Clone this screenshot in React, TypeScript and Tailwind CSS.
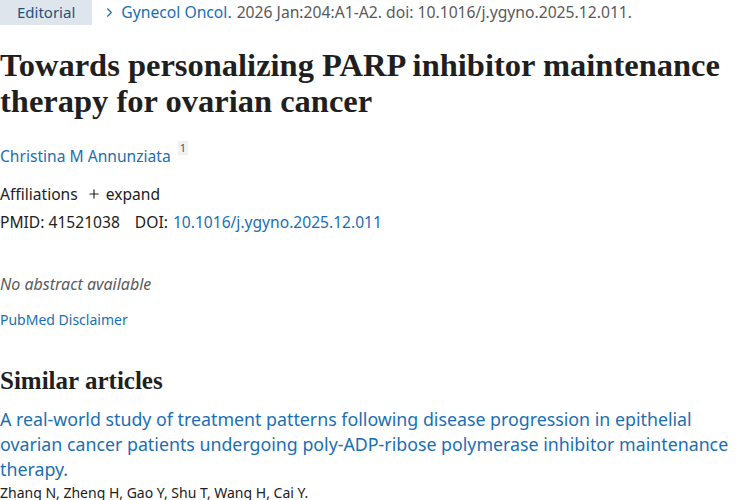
import { Plus, ChevronRight } from "lucide-react";

const sans = "font-['Segoe_UI','Noto_Sans',sans-serif]";
const serif = "font-['Liberation_Serif',serif]";

function Breadcrumb() {
  return (
    <div className="flex items-center text-[15.7px] leading-none">
      <span className="bg-[#dfe5ec] px-[17px] py-[5px] text-[15px] text-[#26517c]">Editorial</span>
      <ChevronRight className="ml-[10px] h-[15px] w-[15px] text-[#1a6fb3]" strokeWidth={1.8} />
      <span className="ml-[4px] text-[#1a6fb3]">Gynecol Oncol.</span>
      <span className="ml-[5px] text-[#5a5a5a]">2026 Jan:204:A1-A2. doi: 10.1016/j.ygyno.2025.12.011.</span>
    </div>
  );
}

export default function App() {
  return (
    <div className={`${sans} h-[500px] w-[750px] overflow-hidden bg-white text-[#212121]`}>
      <Breadcrumb />

      <h1 className={`${serif} mt-[22px] text-[32.5px] font-bold leading-[36px] text-[#1f1f1f]`}>
        Towards personalizing PARP inhibitor maintenance therapy for ovarian cancer
      </h1>

      <div className="mt-[25px] flex items-start text-[15.6px] leading-[24px]">
        <a className="text-[#1a6fb3]">Christina M Annunziata</a>
        <sup className="ml-[7px] mt-[2px] bg-[#f1f1f1] px-[2px] text-[11px] leading-[14px] text-[#555]">1</sup>
      </div>

      <div className="mt-[14px] flex items-center text-[15.6px] leading-[24px] text-[#212121]">
        <span>Affiliations</span>
        <Plus className="ml-[9px] h-[14px] w-[14px]" strokeWidth={2} />
        <span className="ml-[5px]">expand</span>
      </div>

      <div className="mt-[4px] flex text-[15.6px] leading-[24px]">
        <span>PMID: 41521038</span>
        <span className="ml-[15px]">DOI:</span>
        <a className="ml-[5px] text-[#1a6fb3]">10.1016/j.ygyno.2025.12.011</a>
      </div>

      <p className="mt-[38px] text-[16px] leading-[24px] italic text-[#5b5b5b]">No abstract available</p>

      <a className="mt-[14px] block text-[14px] leading-[20px] text-[#1a6fb3]">PubMed Disclaimer</a>

      <h2 className={`${serif} mt-[36px] text-[25px] font-bold leading-[30px] text-[#1f1f1f]`}>Similar articles</h2>

      <a className="mt-[11px] block text-[17.8px] leading-[25px] text-[#1a6fb3]">
        A real-world study of treatment patterns following disease progression in epithelial ovarian cancer patients
        undergoing poly-ADP-ribose polymerase inhibitor maintenance therapy.
      </a>
      <p className="mt-[1px] text-[14px] leading-[20px] text-[#212121]">Zhang N, Zheng H, Gao Y, Shu T, Wang H, Cai Y.</p>
    </div>
  );
}
